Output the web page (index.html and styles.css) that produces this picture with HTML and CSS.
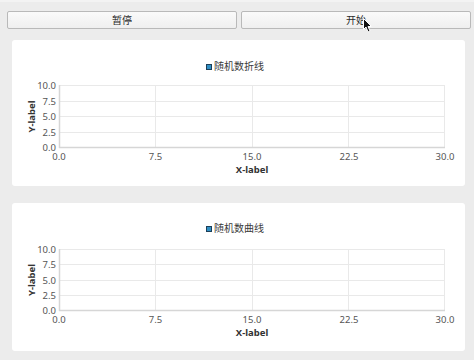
FILE: index.html
```html
<!DOCTYPE html>
<html lang="zh">
<head>
<meta charset="utf-8">
<link rel="stylesheet" href="styles.css">
</head>
<body>
<div class="window">
  <div class="toolbar">
    <button class="btn">暂停</button>
    <button class="btn">开始</button>
  </div>
  <div class="card card-a">
    <svg class="chart" width="453" height="146" viewBox="0 0 453 146">
      <g class="legend">
        <rect x="194.5" y="24.5" width="5" height="5" class="swatch"/>
        <text x="202" y="30" class="legend-text">随机数折线</text>
      </g>
      <g class="grid">
        <line x1="47" y1="45.5" x2="433" y2="45.5"/>
        <line x1="47" y1="61.5" x2="433" y2="61.5"/>
        <line x1="47" y1="76.5" x2="433" y2="76.5"/>
        <line x1="47" y1="92.5" x2="433" y2="92.5"/>
        <line x1="143.5" y1="45" x2="143.5" y2="108"/>
        <line x1="240.5" y1="45" x2="240.5" y2="108"/>
        <line x1="336.5" y1="45" x2="336.5" y2="108"/>
        <line x1="432.5" y1="45" x2="432.5" y2="108"/>
      </g>
      <g class="axis">
        <line x1="47.5" y1="45" x2="47.5" y2="108"/>
        <line x1="47" y1="107.5" x2="433" y2="107.5"/>
      </g>
      <g class="ticks-y">
        <text x="44" y="49">10.0</text>
        <text x="44" y="65">7.5</text>
        <text x="44" y="80">5.0</text>
        <text x="44" y="96">2.5</text>
        <text x="44" y="111">0.0</text>
      </g>
      <g class="ticks-x">
        <text x="47" y="120">0.0</text>
        <text x="143.5" y="120">7.5</text>
        <text x="240" y="120">15.0</text>
        <text x="337" y="120">22.5</text>
        <text x="433" y="120">30.0</text>
      </g>
      <text class="axis-title" x="240" y="133">X-label</text>
      <text class="axis-title" transform="translate(23 76.5) rotate(-90)">Y-label</text>
    </svg>
  </div>
  <div class="card card-b">
    <svg class="chart" width="453" height="148" viewBox="0 0 453 148">
      <g class="legend">
        <rect x="194.5" y="23.5" width="5" height="5" class="swatch"/>
        <text x="202" y="29" class="legend-text">随机数曲线</text>
      </g>
      <g class="grid">
        <line x1="47" y1="46.5" x2="433" y2="46.5"/>
        <line x1="47" y1="61.5" x2="433" y2="61.5"/>
        <line x1="47" y1="77.5" x2="433" y2="77.5"/>
        <line x1="47" y1="92.5" x2="433" y2="92.5"/>
        <line x1="143.5" y1="46" x2="143.5" y2="108"/>
        <line x1="240.5" y1="46" x2="240.5" y2="108"/>
        <line x1="336.5" y1="46" x2="336.5" y2="108"/>
        <line x1="432.5" y1="46" x2="432.5" y2="108"/>
      </g>
      <g class="axis">
        <line x1="47.5" y1="46" x2="47.5" y2="108"/>
        <line x1="47" y1="107.5" x2="433" y2="107.5"/>
      </g>
      <g class="ticks-y">
        <text x="44" y="50">10.0</text>
        <text x="44" y="65">7.5</text>
        <text x="44" y="81">5.0</text>
        <text x="44" y="96">2.5</text>
        <text x="44" y="111">0.0</text>
      </g>
      <g class="ticks-x">
        <text x="47" y="120">0.0</text>
        <text x="143.5" y="120">7.5</text>
        <text x="240" y="120">15.0</text>
        <text x="337" y="120">22.5</text>
        <text x="433" y="120">30.0</text>
      </g>
      <text class="axis-title" x="240" y="133">X-label</text>
      <text class="axis-title" transform="translate(23 77) rotate(-90)">Y-label</text>
    </svg>
  </div>
  <svg class="cursor" width="10" height="16" viewBox="0 0 10 16">
    <path d="M0.5 0.5 L0.5 11.5 L3 9 L5 14 L7 13 L5 8.5 L8.5 8.5 Z" fill="#111" stroke="#fff" stroke-width="1"/>
  </svg>
</div>
</body>
</html>
```

FILE: styles.css
```css
* { box-sizing: border-box; }
html, body {
  margin: 0;
  padding: 0;
  background: #ececec;
  font-family: "Noto Sans", "Noto Sans CJK SC", sans-serif;
}
.window {
  position: relative;
  width: 474px;
  height: 360px;
  padding: 11px 3px 0 7px;
  background: #ececec;
  border-top: 2px solid #f3f3f3;
  padding-top: 9px;
}
.toolbar {
  display: flex;
  gap: 4px;
}
.btn {
  flex: 1;
  height: 18px;
  margin: 0;
  padding: 0;
  border: 1px solid #b9b9b9;
  border-radius: 2px;
  background: linear-gradient(#fafafa, #efefef);
  font-family: "Noto Sans CJK SC", sans-serif;
  font-size: 10px;
  color: #2a2a2a;
  line-height: 16px;
}
.card {
  width: 453px;
  margin-left: 5px;
  background: #ffffff;
  border-radius: 3px;
}
.card-a { margin-top: 11px; height: 146px; }
.card-b { margin-top: 17px; height: 148px; }
.chart { display: block; }
.swatch { fill: #2f8fc4; stroke: #1d3f58; stroke-width: 1; }
.legend-text {
  font-family: "Noto Sans CJK SC", sans-serif;
  font-size: 10px;
  fill: #3a3a3a;
}
.grid line { stroke: #e9e9e9; stroke-width: 1; }
.axis line { stroke: #d6d6d6; stroke-width: 1.5; }
.ticks-y text {
  font-size: 9.5px;
  fill: #555;
  text-anchor: end;
}
.ticks-x text {
  font-size: 9.5px;
  fill: #555;
  text-anchor: middle;
}
.axis-title {
  font-size: 9.5px;
  font-weight: bold;
  fill: #333;
  text-anchor: middle;
}
.cursor {
  position: absolute;
  left: 363px;
  top: 16px;
}
```
